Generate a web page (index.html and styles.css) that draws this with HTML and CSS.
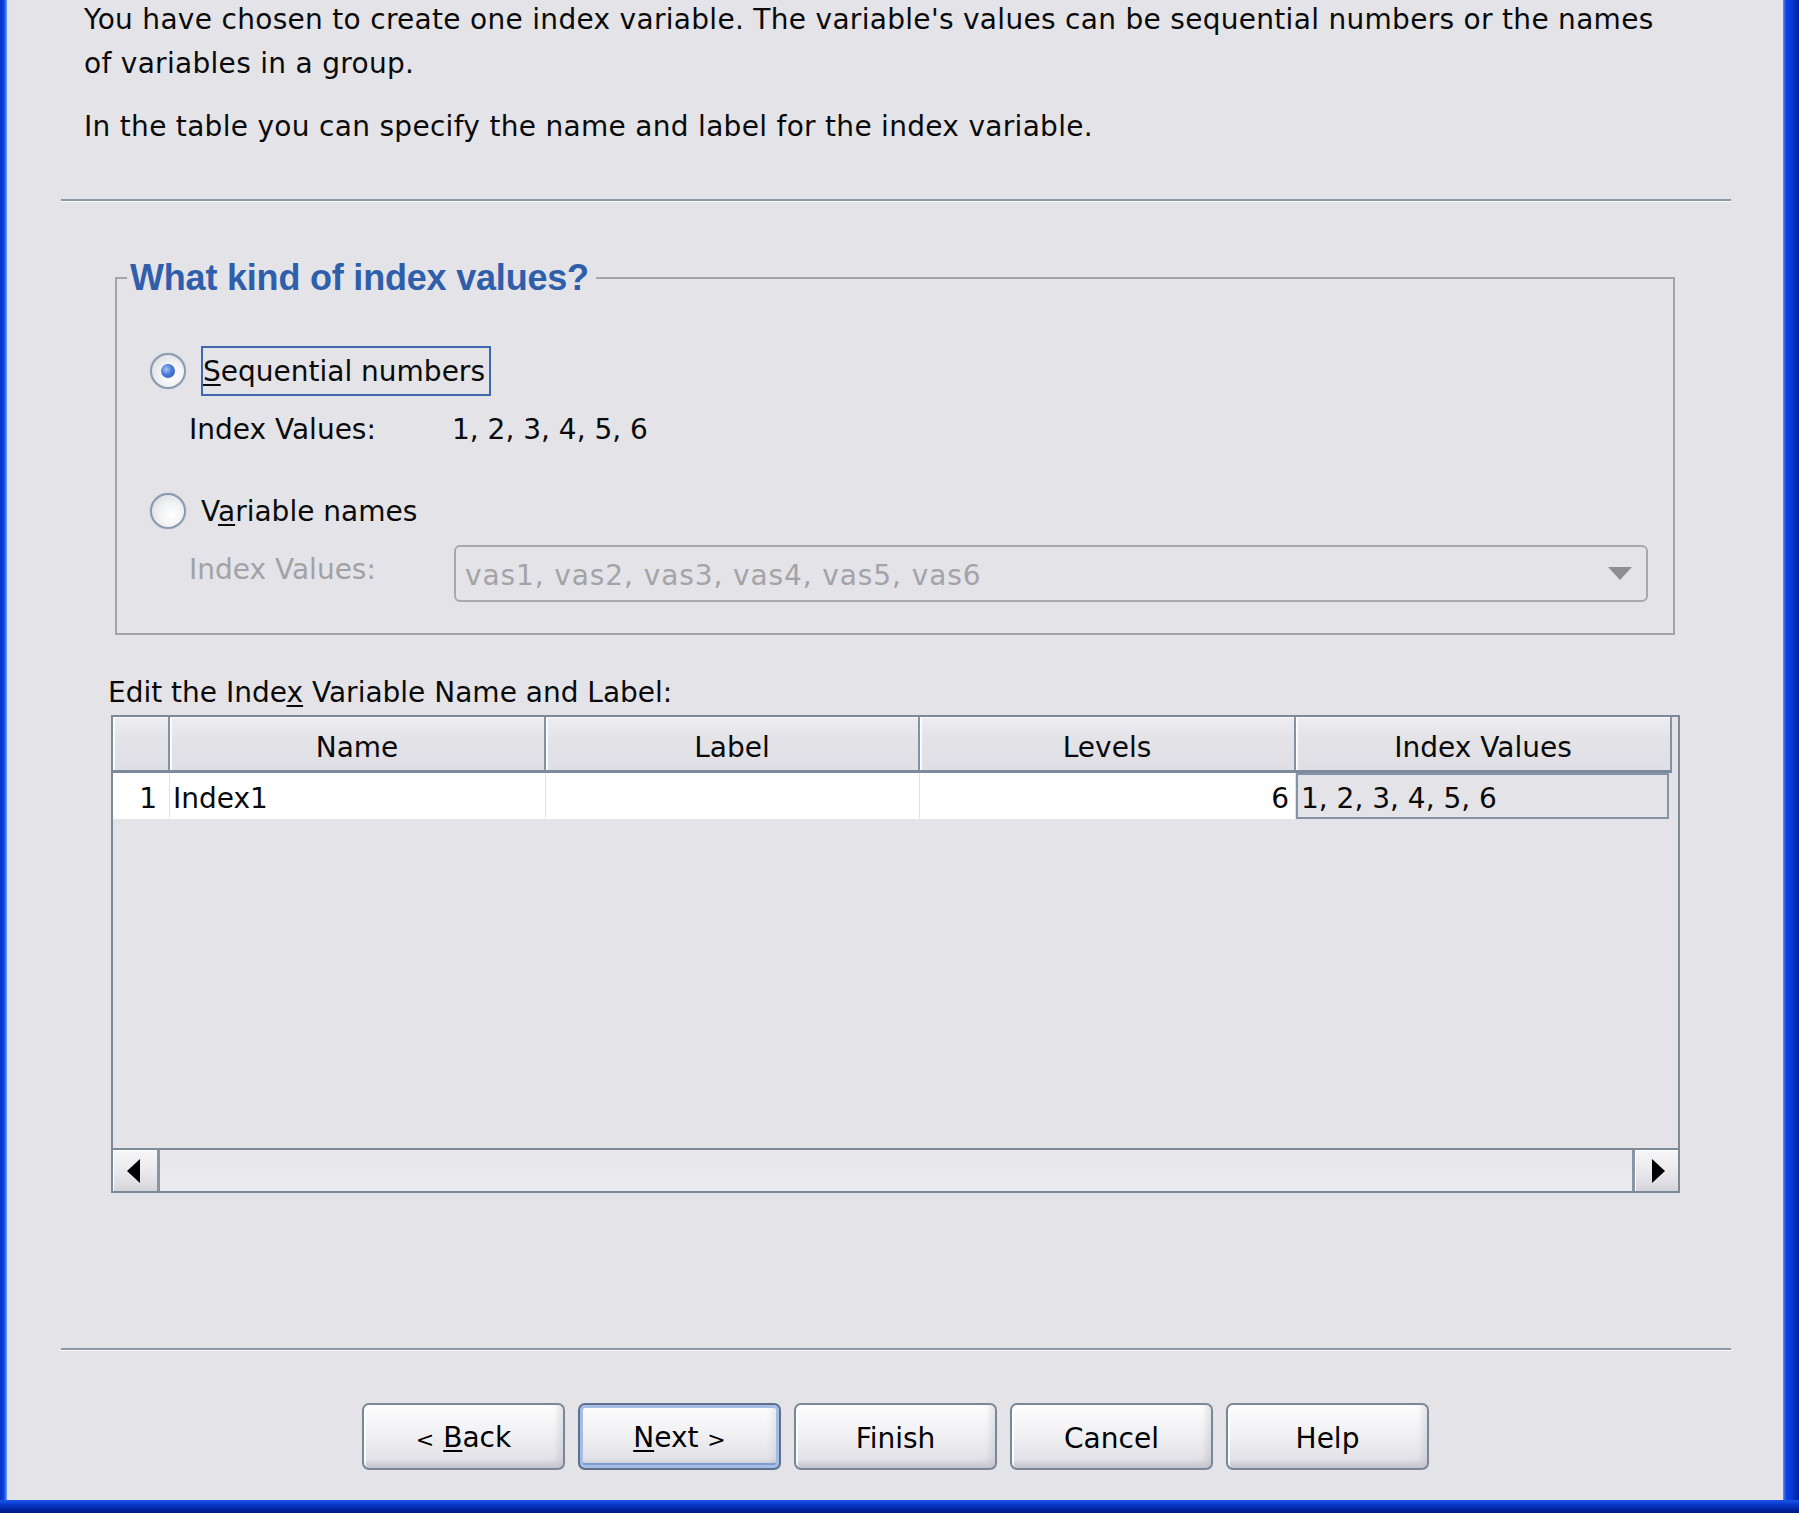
FILE: index.html
```html
<!DOCTYPE html>
<html lang="en">
<head>
<meta charset="utf-8">
<title>Index variable wizard</title>
<link rel="stylesheet" href="styles.css">
</head>
<body>
<div class="window">
  <div class="client">
    <div class="intro">
      <p class="p1">You have chosen to create one index variable. The variable's values can be sequential numbers or the names of variables in a group.</p>
      <p class="p2">In the table you can specify the name and label for the index variable.</p>
    </div>
    <div class="sep"></div>

    <fieldset class="group">
      <legend>What kind of index values?</legend>
      <div class="opt-row">
        <span class="radio on"></span>
        <span class="focus-label"><u>S</u>equential numbers</span>
      </div>
      <div class="idx-row first">
        <span class="idx-label">Index Values:</span>
        <span class="idx-value">1, 2, 3, 4, 5, 6</span>
      </div>
      <div class="opt-row second">
        <span class="radio"></span>
        <span class="plain-label">V<u>a</u>riable names</span>
      </div>
      <div class="idx-row disabled">
        <span class="idx-label">Index Values:</span>
        <div class="combo">
          <span class="combo-text">vas1, vas2, vas3, vas4, vas5, vas6</span>
          <svg class="combo-arrow" width="24" height="14" viewBox="0 0 24 14"><polygon points="0,0 24,0 12,13" fill="#8e8e92"/></svg>
        </div>
      </div>
    </fieldset>

    <div class="edit-label">Edit the Inde<u>x</u> Variable Name and Label:</div>

    <div class="pane">
      <div class="grid head">
        <div class="hcell"></div>
        <div class="hcell">Name</div>
        <div class="hcell">Label</div>
        <div class="hcell">Levels</div>
        <div class="hcell">Index Values</div>
      </div>
      <div class="grid row">
        <div class="cell num">1</div>
        <div class="cell">Index1</div>
        <div class="cell"></div>
        <div class="cell num levels">6</div>
        <div class="cell focus">1, 2, 3, 4, 5, 6</div>
      </div>
      <div class="viewport"></div>
      <div class="hscroll">
        <div class="sbtn left">
          <svg width="14" height="24" viewBox="0 0 14 24"><polygon points="13,0 13,24 0,12" fill="#000"/></svg>
        </div>
        <div class="track"></div>
        <div class="sbtn right">
          <svg width="14" height="24" viewBox="0 0 14 24"><polygon points="1,0 1,24 14,12" fill="#000"/></svg>
        </div>
      </div>
    </div>

    <div class="sep bottom"></div>

    <div class="buttons">
      <button class="btn"><span class="lt">&lt;</span> <u>B</u>ack</button>
      <button class="btn default"><u>N</u>ext <span class="lt">&gt;</span></button>
      <button class="btn">Finish</button>
      <button class="btn">Cancel</button>
      <button class="btn">Help</button>
    </div>
  </div>
</div>
</body>
</html>
```

FILE: styles.css
```css
html, body {
  margin: 0;
  padding: 0;
  background: #ffffff;
}

body {
  font-family: "DejaVu Sans", "Liberation Sans", sans-serif;
  font-size: 28px;
  line-height: 44px;
  color: #0a0a0a;
}

.window {
  width: 1799px;
  height: 1513px;
  box-sizing: border-box;
  padding: 0 16px 13px 7px;
  background:
    linear-gradient(to bottom, transparent 1500px, #1a55e6 1500px, #0a3ccf 1504px, #00209c 1510px, #001680 1513px),
    linear-gradient(to right, #0631c9 0, #0a45e2 4px, #4a84f5 6px, #6fa0f8 7px, transparent 7px, transparent 1783px, #5c90f6 1783px, #0b45e4 1786px, #0736d2 1792px, #00229e 1799px);
  background-color: #0a3fd8;
}

.client {
  height: 1500px;
  background: #e3e3e8;
  overflow: hidden;
}

/* intro text */
.intro {
  margin-left: 77px;
  width: 1570px;
  letter-spacing: 0.3px;
}
.intro p {
  margin: 0;
}
.intro .p1 {
  margin-top: -2px;
}
.intro .p2 {
  margin-top: 19px;
}

.sep {
  margin: 50px 0 0 54px;
  width: 1670px;
  height: 0;
  border-top: 2px solid #8b98a5;
  border-bottom: 1px solid #fafafc;
}
.sep.bottom {
  margin-top: 155px;
}

/* group box */
.group {
  margin: 56px 0 0 108px;
  width: 1560px;
  box-sizing: border-box;
  border: 2px solid #a3a3a8;
  padding: 0 0 31px 0;
  min-inline-size: 0;
}
.group legend {
  margin-left: 10px;
  padding: 0 7px 0 3px;
  font-family: "Liberation Sans", Arial, sans-serif;
  font-weight: bold;
  font-size: 36px;
  line-height: 40px;
  color: #2f5eaa;
  letter-spacing: -0.2px;
}

.opt-row {
  display: flex;
  align-items: center;
  height: 50px;
  margin: 48px 0 0 33px;
  gap: 15px;
}
.opt-row.second {
  margin-top: 34px;
}

.radio {
  flex: none;
  width: 36px;
  height: 36px;
  box-sizing: border-box;
  border-radius: 50%;
  border: 2px solid #8a9bb0;
  background: radial-gradient(circle at 62% 62%, #ffffff 0, #f2f3f5 40%, #d3d7de 100%);
  box-shadow: 0 0 1px rgba(100, 120, 150, 0.5);
  display: flex;
  align-items: center;
  justify-content: center;
}
.radio.on::after {
  content: "";
  width: 14px;
  height: 14px;
  border-radius: 50%;
  background: radial-gradient(circle at 38% 38%, #a9c6f6 0, #4a7ad6 45%, #2b54ad 100%);
}

.focus-label {
  box-sizing: border-box;
  height: 50px;
  line-height: 48px;
  border: 2px solid #4167ae;
  padding: 0 4px 0 0;
}
.plain-label {
  line-height: 48px;
  padding-top: 2px;
}

u {
  text-decoration-thickness: 2px;
  text-underline-offset: 3px;
}

.idx-row {
  display: grid;
  grid-template-columns: 263px 1fr;
  margin-left: 72px;
}
.idx-row.first {
  margin-top: 12px;
}
.idx-row.disabled {
  margin-top: 9px;
  align-items: start;
  margin-right: 25px;
}
.idx-row.disabled .idx-label {
  margin-top: 3px;
  color: #a2a2a6;
}

.combo {
  margin-left: 2px;
  height: 57px;
  box-sizing: border-box;
  border: 2px solid #a9a9ad;
  border-radius: 6px;
  display: flex;
  align-items: center;
  justify-content: space-between;
  padding: 4px 14px 0 9px;
}
.combo-text {
  color: #a3a3a8;
  letter-spacing: 0.9px;
}
.combo-arrow {
  display: block;
  margin-top: -4px;
}

/* table */
.edit-label {
  margin: 36px 0 0 101px;
}

.pane {
  margin-left: 104px;
  width: 1569px;
  height: 478px;
  box-sizing: border-box;
  border: 2px solid #7c8997;
  display: flex;
  flex-direction: column;
  background: #e3e3e8;
}

.grid {
  display: grid;
  grid-template-columns: 57px 376px 374px 376px 376px;
}

.hcell {
  box-sizing: border-box;
  height: 56px;
  padding-top: 9px;
  text-align: center;
  background: linear-gradient(#eeeef2, #e3e3e8 40%, #dedee4);
  border-bottom: 3px solid #7b8a9c;
  border-right: 2px solid #8392a3;
  box-shadow: inset 2px 1px 0 #fbfbfd;
}

.row .cell {
  box-sizing: border-box;
  height: 46px;
  padding: 6px 3px 0 3px;
  line-height: 40px;
  background: #ffffff;
  border-right: 1px solid #e3e3e7;
  white-space: nowrap;
  overflow: hidden;
}
.row .cell.num {
  text-align: right;
  padding-right: 12px;
}
.row .cell.levels {
  padding-right: 6px;
}
.row .cell.focus {
  background: #e3e3e8;
  border: 2px solid #8493a5;
  margin-right: 3px;
  padding: 4px 3px 0 3px;
}

.viewport {
  flex: 1;
  background: #e3e3e8;
}

.hscroll {
  display: flex;
  height: 43px;
  box-sizing: border-box;
  border-top: 2px solid #7d8a98;
}
.sbtn {
  flex: none;
  display: flex;
  align-items: center;
  justify-content: center;
  box-sizing: border-box;
  background: linear-gradient(#f7f7f9, #e7e7eb 60%, #d4d4da);
  box-shadow: inset 1px 1px 0 #ffffff;
}
.sbtn.left {
  width: 47px;
  border-right: 3px solid #8795a5;
  padding-right: 2px;
}
.sbtn.right {
  width: 46px;
  border-left: 3px solid #8795a5;
  padding-left: 2px;
}
.track {
  flex: 1;
  background: linear-gradient(#e6e6eb, #ececf0);
}

/* buttons */
.buttons {
  display: flex;
  gap: 13px;
  margin: 52px 0 0 355px;
}
.btn {
  width: 203px;
  height: 67px;
  box-sizing: border-box;
  font-family: "DejaVu Sans", "Liberation Sans", sans-serif;
  font-size: 28px;
  line-height: 44px;
  color: #000;
  padding: 4px 0 0 0;
  border: 2px solid #7a8797;
  border-radius: 7px;
  background: linear-gradient(#fefefe 0, #f1f1f4 45%, #e3e3e8 85%, #d2d2d9 100%);
  box-shadow: inset -5px -4px 6px rgba(120, 120, 140, 0.18), inset 2px 2px 0 #ffffff;
}
.btn .lt {
  font-size: 22px;
}
.btn.default {
  border-color: #5c6f8c;
  box-shadow: inset 0 0 0 3px #a6bde3, inset 0 -5px 0 #7d9cd0, inset -5px -4px 8px rgba(120, 120, 140, 0.2);
}
```
